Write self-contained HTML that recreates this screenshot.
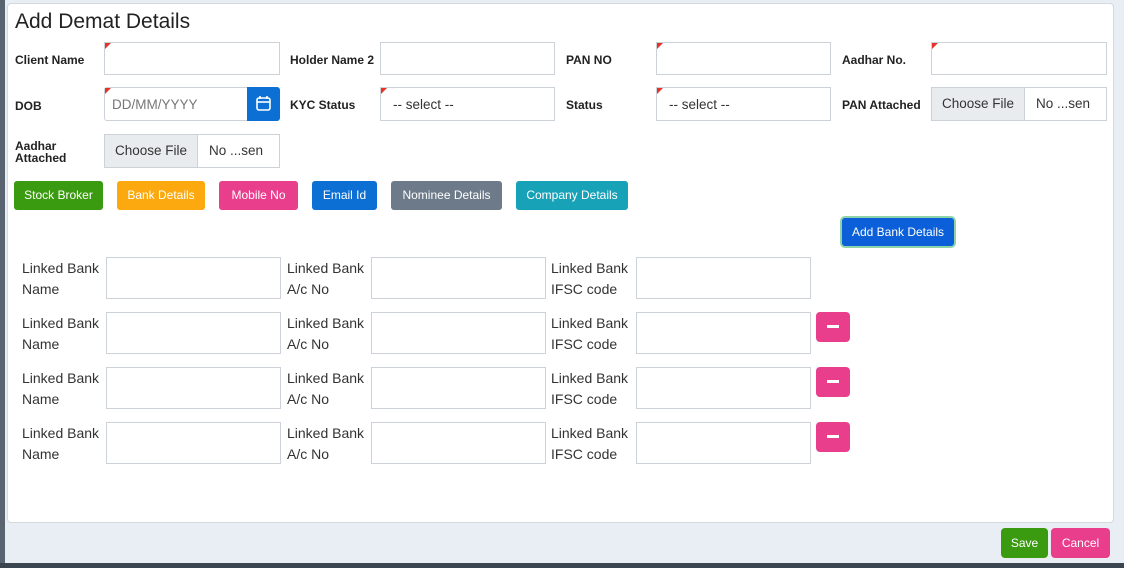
<!DOCTYPE html><html><head><style>
body{margin:0;width:1124px;height:568px;background:#e9eef5;font-family:"Liberation Sans",sans-serif;position:relative;overflow:hidden}
.a{position:absolute}
.card{left:7px;top:3px;width:1107px;height:520px;background:#fff;border:1px solid #d4d9e0;border-radius:4px;box-sizing:border-box}
.lb{position:absolute;font-weight:bold;font-size:12px;color:#222;white-space:nowrap}
.in{position:absolute;border:1px solid #ccd2d8;box-sizing:border-box;background:#fff}
.req::before{content:"";position:absolute;left:0;top:0;border-top:6px solid #e5322b;border-right:6px solid transparent}
.sel{font-size:13.5px;color:#333;padding:9px 0 0 12px}
.btn{position:absolute;color:#fff;font-size:12px;border-radius:3px;text-align:center;line-height:29px;height:29px;white-space:nowrap}
.bl{position:absolute;font-size:14px;color:#333;line-height:21px;white-space:nowrap}
.mn{position:absolute;left:816px;width:34px;height:30px;background:#e83e8c;border-radius:4px}
.mn::after{content:"";position:absolute;left:11px;top:13px;width:12px;height:3px;background:#fff}
.file{position:absolute;border:1px solid #ccd2d8;box-sizing:border-box;font-size:13.5px;color:#333;display:flex;white-space:nowrap;overflow:hidden}
.file span:first-child{background:#e9ecef;border-right:1px solid #ccd2d8;width:92px;text-align:center;line-height:32px;flex:none}
.file span:last-child{padding:0 11px;line-height:32px}
</style></head><body>
<div class="a" style="left:0;top:0;width:5px;height:568px;background:#5a6470"></div>
<div class="a" style="left:0;top:563px;width:1124px;height:5px;background:#3a4550"></div>
<div class="a card"></div>
<div class="a" style="left:15px;top:10px;font-size:21px;color:#222">Add Demat Details</div>

<div class="lb" style="left:15px;top:53px">Client Name</div>
<div class="in req" style="left:104px;top:42px;width:176px;height:33px"></div>
<div class="lb" style="left:290px;top:53px">Holder Name 2</div>
<div class="in" style="left:380px;top:42px;width:175px;height:33px"></div>
<div class="lb" style="left:566px;top:53px">PAN NO</div>
<div class="in req" style="left:656px;top:42px;width:175px;height:33px"></div>
<div class="lb" style="left:842px;top:53px">Aadhar No.</div>
<div class="in req" style="left:931px;top:42px;width:176px;height:33px"></div>

<div class="lb" style="left:15px;top:99px">DOB</div>
<div class="in req" style="left:104px;top:87px;width:145px;height:34px;border-radius:3px 0 0 3px;font-size:13.5px;color:#777;padding:9px 0 0 7px">DD/MM/YYYY</div>
<div class="a" style="left:247px;top:87px;width:33px;height:34px;background:#0b6fd4;border-radius:0 3px 3px 0"><svg width="33" height="34"><rect x="10" y="11" width="13" height="12" rx="2" fill="none" stroke="#fff" stroke-width="1.6"/><line x1="10" y1="15" x2="23" y2="15" stroke="#fff" stroke-width="1.6"/><line x1="13" y1="9" x2="13" y2="12" stroke="#fff" stroke-width="1.6"/><line x1="20" y1="9" x2="20" y2="12" stroke="#fff" stroke-width="1.6"/></svg></div>
<div class="lb" style="left:290px;top:98px">KYC Status</div>
<div class="in req sel" style="left:380px;top:87px;width:175px;height:34px">-- select --</div>
<div class="lb" style="left:566px;top:98px">Status</div>
<div class="in req sel" style="left:656px;top:87px;width:175px;height:34px">-- select --</div>
<div class="lb" style="left:842px;top:98px">PAN Attached</div>
<div class="file" style="left:931px;top:87px;width:176px;height:34px"><span>Choose File</span><span>No ...sen</span></div>

<div class="lb" style="left:15px;top:140px;line-height:12px">Aadhar<br>Attached</div>
<div class="file" style="left:104px;top:134px;width:176px;height:34px"><span>Choose File</span><span>No ...sen</span></div>

<div class="btn" style="left:14px;top:181px;width:89px;background:#3a9a10">Stock Broker</div>
<div class="btn" style="left:117px;top:181px;width:88px;background:#fba90f">Bank Details</div>
<div class="btn" style="left:219px;top:181px;width:79px;background:#e83e8c">Mobile No</div>
<div class="btn" style="left:312px;top:181px;width:65px;background:#0b6fd4">Email Id</div>
<div class="btn" style="left:391px;top:181px;width:111px;background:#6c7a89">Nominee Details</div>
<div class="btn" style="left:516px;top:181px;width:112px;background:#17a2b8">Company Details</div>
<div class="btn" style="left:840px;top:216px;width:112px;height:28px;line-height:28px;background:#0b5fd8;border:2px solid #8fd3a8;border-radius:5px">Add Bank Details</div>

<div class="bl" style="left:22px;top:258px">Linked Bank<br>Name</div><div class="in" style="left:106px;top:257px;width:175px;height:42px"></div>
<div class="bl" style="left:287px;top:258px">Linked Bank<br>A/c No</div><div class="in" style="left:371px;top:257px;width:175px;height:42px"></div>
<div class="bl" style="left:551px;top:258px">Linked Bank<br>IFSC code</div><div class="in" style="left:636px;top:257px;width:175px;height:42px"></div>

<div class="bl" style="left:22px;top:313px">Linked Bank<br>Name</div><div class="in" style="left:106px;top:312px;width:175px;height:42px"></div>
<div class="bl" style="left:287px;top:313px">Linked Bank<br>A/c No</div><div class="in" style="left:371px;top:312px;width:175px;height:42px"></div>
<div class="bl" style="left:551px;top:313px">Linked Bank<br>IFSC code</div><div class="in" style="left:636px;top:312px;width:175px;height:42px"></div>
<div class="mn" style="top:312px"></div>

<div class="bl" style="left:22px;top:368px">Linked Bank<br>Name</div><div class="in" style="left:106px;top:367px;width:175px;height:42px"></div>
<div class="bl" style="left:287px;top:368px">Linked Bank<br>A/c No</div><div class="in" style="left:371px;top:367px;width:175px;height:42px"></div>
<div class="bl" style="left:551px;top:368px">Linked Bank<br>IFSC code</div><div class="in" style="left:636px;top:367px;width:175px;height:42px"></div>
<div class="mn" style="top:367px"></div>

<div class="bl" style="left:22px;top:423px">Linked Bank<br>Name</div><div class="in" style="left:106px;top:422px;width:175px;height:42px"></div>
<div class="bl" style="left:287px;top:423px">Linked Bank<br>A/c No</div><div class="in" style="left:371px;top:422px;width:175px;height:42px"></div>
<div class="bl" style="left:551px;top:423px">Linked Bank<br>IFSC code</div><div class="in" style="left:636px;top:422px;width:175px;height:42px"></div>
<div class="mn" style="top:422px"></div>

<div class="btn" style="left:1001px;top:528px;width:47px;height:30px;line-height:30px;background:#3a9a10;border-radius:4px">Save</div>
<div class="btn" style="left:1051px;top:528px;width:59px;height:30px;line-height:30px;background:#e83e8c;border-radius:4px">Cancel</div>
</body></html>
